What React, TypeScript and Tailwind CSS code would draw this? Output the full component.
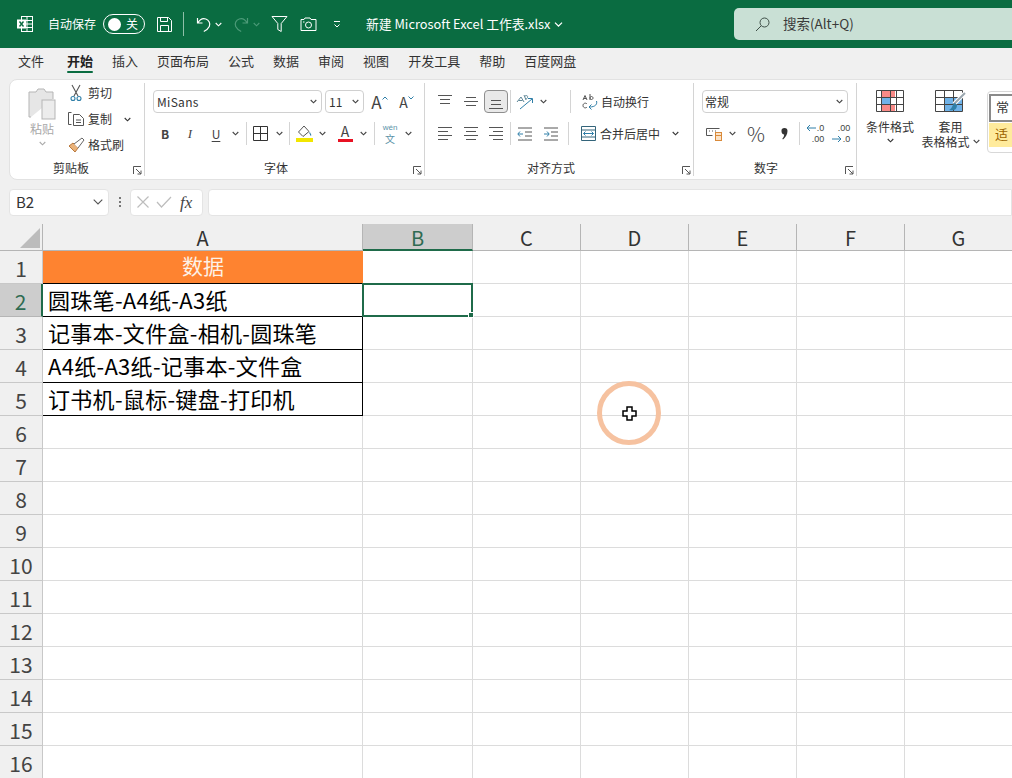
import type { ReactNode } from "react";

const tabs = ["文件", "开始", "插入", "页面布局", "公式", "数据", "审阅", "视图", "开发工具", "帮助", "百度网盘"];
const columns = ["B", "C", "D", "E", "F", "G"];
const rows = Array.from({ length: 16 }, (_, i) => i + 1);
const cellText: Record<number, string> = {
  2: "圆珠笔-A4纸-A3纸",
  3: "记事本-文件盒-相机-圆珠笔",
  4: "A4纸-A3纸-记事本-文件盒",
  5: "订书机-鼠标-键盘-打印机",
};

const Chev = ({ className = "text-[#444]" }: { className?: string }) => (
  <svg width="7" height="5" viewBox="0 0 7 5" fill="none" stroke="currentColor" strokeWidth="1.1" className={`shrink-0 ${className}`}>
    <path d="M.7 1 3.5 3.8 6.3 1" />
  </svg>
);

const Launcher = () => (
  <svg width="9" height="9" viewBox="0 0 9 9" fill="none" stroke="#555" strokeWidth="1" className="absolute right-[2px] bottom-[1px]">
    <path d="M.5 8V.5H8M3 3l5 5M8 4.5V8H4.5" />
  </svg>
);

const Sep = ({ className = "" }: { className?: string }) => <div className={`h-[23px] w-px bg-[#d4d4d4] ${className}`} />;

const Cell = ({ className, children }: { className: string; children: ReactNode }) => (
  <div className={`flex h-[23px] shrink-0 items-center justify-center ${className}`}>{children}</div>
);

const Lines = ({ kind }: { kind: "top" | "mid" | "bottom" | "left" | "center" | "right" }) => {
  const paths = {
    top: "M1 1.5h14M3 5.5h10M3 9.5h10",
    mid: "M3 3.5h10M1 7.5h14M3 11.5h10",
    bottom: "M3 6.5h10M3 10.5h10M1 14.5h14",
    left: "M1 1.5h14M1 5.5h10M1 9.5h14M1 13.5h10",
    center: "M1 1.5h14M3 5.5h10M1 9.5h14M3 13.5h10",
    right: "M1 1.5h14M5 5.5h10M1 9.5h14M5 13.5h10",
  };
  return (
    <svg width="16" height="16" viewBox="0 0 16 16" fill="none" stroke="#555" strokeWidth="1">
      <path d={paths[kind]} />
    </svg>
  );
};

const ExcelLogo = () => (
  <svg width="18" height="18" viewBox="0 0 18 18" className="shrink-0">
    <rect x="5.5" y="1.5" width="11" height="15" fill="none" stroke="#fff" strokeWidth="1" />
    <path d="M11 1.5v15M5.5 5.5h11M5.5 9h11M5.5 12.5h11" stroke="#fff" strokeWidth="1" />
    <rect x="1" y="4.5" width="9" height="9" fill="#fff" />
    <path d="M3.5 6.5l4 5M7.5 6.5l-4 5" stroke="#0a6c41" strokeWidth="1.4" />
  </svg>
);

const TitleBar = () => (
  <div className="flex h-[48px] items-center whitespace-nowrap bg-[#0a6c41] text-white [&>*]:shrink-0">
    <div className="ml-[16px]">
      <ExcelLogo />
    </div>
    <span className="ml-[14px] text-[12px] leading-none">自动保存</span>
    <div className="ml-[7px] flex h-[20px] w-[42px] items-center rounded-full border border-white pl-[4px]">
      <div className="size-[13px] rounded-full bg-white" />
      <span className="ml-[5px] text-[12px] leading-none">关</span>
    </div>
    <svg width="17" height="17" viewBox="0 0 17 17" fill="none" stroke="#fff" strokeWidth="1" className="ml-[11px]">
      <path d="M1.5 1.5h11l3 3v11h-14z" />
      <path d="M4.5 1.5v4h7v-4M4.5 15.5v-6h8v6" />
    </svg>
    <div className="ml-[10px] h-[24px] w-px bg-[#8fbfa8]" />
    <svg width="17" height="17" viewBox="0 0 17 17" fill="none" stroke="#fff" strokeWidth="1.2" className="ml-[12px]">
      <path d="M1.5 2v5h5M1.8 7c2-3.5 5-5 8-4s5 4.5 3.5 7.5-3.5 4-5.5 5" />
    </svg>
    <Chev className="ml-[2px] text-white" />
    <svg width="17" height="17" viewBox="0 0 17 17" fill="none" stroke="#4c9a78" strokeWidth="1.2" className="ml-[10px]">
      <path d="M15.5 2v5h-5M15.2 7c-2-3.5-5-5-8-4s-5 4.5-3.5 7.5 3.5 4 5.5 5" />
    </svg>
    <Chev className="ml-[4px] text-[#4c9a78]" />
    <svg width="17" height="18" viewBox="0 0 17 18" fill="none" stroke="#fff" strokeWidth="1" className="ml-[11px]">
      <path d="M1 1.5h15l-5.8 7v8l-3.4-2v-6z" />
    </svg>
    <svg width="17" height="15" viewBox="0 0 17 15" fill="none" stroke="#fff" strokeWidth="1" className="ml-[12px]">
      <path d="M1 2.5h3l1-1.5h5l1 1.5h5v11H1z" />
      <circle cx="8.5" cy="8" r="3" />
      <path d="M3 5h1.5" />
    </svg>
    <svg width="8" height="8" viewBox="0 0 8 8" fill="none" stroke="#fff" strokeWidth="1" className="ml-[16px]">
      <path d="M1 1.5h6M1.5 4.5 4 7l2.5-2.5" />
    </svg>
    <span className="ml-[25px] w-[189px] text-[12.8px] leading-none">新建 Microsoft Excel 工作表.xlsx</span>
    <Chev className="scale-125 text-white" />
    <div className="ml-[172px] flex h-[32px] w-[300px] items-center rounded-l-[5px] bg-[#c9e0d5] pl-[21px] text-[#3a3a3a]">
      <svg width="15" height="15" viewBox="0 0 15 15" fill="none" stroke="#3f4f48" strokeWidth="1">
        <circle cx="9.5" cy="5.5" r="4.5" />
        <path d="M6.2 8.8 1 14" />
      </svg>
      <span className="ml-[13px] text-[13.5px] leading-none">搜索(Alt+Q)</span>
    </div>
  </div>
);

const TabBar = () => (
  <div className="flex h-[31px] gap-[19px] bg-[#f0f0f0] pl-[18px] pt-[4px] text-[13px] leading-[18px] text-[#333]">
    {tabs.map((tab) =>
      tab === "开始" ? (
        <div key={tab} className="ml-[4px] flex h-[21px] flex-col items-center font-bold text-[#222]">
          {tab}
          <div className="mt-[1px] h-[2px] w-[26px] rounded-full bg-[#0a6c41]" />
        </div>
      ) : (
        <div key={tab}>{tab}</div>
      ),
    )}
  </div>
);

const ClipboardGroup = () => (
  <div className="relative flex h-full w-[135px] shrink-0 border-r border-[#d4d4d4]">
    <div className="ml-[14px] flex w-[36px] flex-col items-center pt-[4px]">
      <svg width="30" height="34" viewBox="0 0 30 34" fill="none" stroke="#b5b5b5" strokeWidth="1">
        <path d="M4 30H2V5h7l2-3h6l2 3h7v7" fill="#e6e6e6" />
        <rect x="15" y="13" width="13" height="19" fill="#ececec" />
      </svg>
      <span className="mt-[-2px] text-[12px] leading-[20px] text-[#a8a8a8]">粘贴</span>
      <Chev className="mt-[2px] text-[#aaa]" />
    </div>
    <div className="ml-[8px] flex flex-col gap-[6px] pt-[0px] text-[12px] leading-[20px] text-[#333]">
      <div className="flex items-center gap-[4px]">
        <svg width="16" height="18" viewBox="0 0 16 18" fill="none" strokeWidth="1.1">
          <path d="M4 1l6 11M12 1 6 12" stroke="#555" />
          <circle cx="5" cy="14.5" r="2" stroke="#2f7fa8" />
          <circle cx="11" cy="14.5" r="2" stroke="#2f7fa8" />
        </svg>
        剪切
      </div>
      <div className="flex items-center gap-[3px]">
        <svg width="17" height="16" viewBox="0 0 17 16" fill="none" stroke="#555" strokeWidth="1">
          <path d="M3.5 13.5h-3V1.5h3M5.5 3.5h6l4 4v7h-10zM8 9h5M8 11.5h5" />
        </svg>
        <span>复制</span>
        <Chev className="ml-[9px]" />
      </div>
      <div className="flex items-center gap-[3px]">
        <svg width="17" height="16" viewBox="0 0 17 16" fill="none" strokeWidth="1">
          <path d="M1 9l6 6 3-4-5-5z" fill="#e9b27a" stroke="#b8773a" />
          <path d="M6 7l8-6 2 2-6 8" fill="#fff" stroke="#666" />
        </svg>
        格式刷
      </div>
    </div>
    <div className="absolute bottom-[-1px] left-0 w-[122px] text-center text-[12px] leading-[18px] text-[#333]">剪贴板</div>
    <Launcher />
  </div>
);

const FontGroup = () => (
  <div className="relative h-full w-[280px] shrink-0 border-r border-[#d4d4d4] pl-[8px] pt-[7px]">
    <div className="flex h-[23px] items-center">
      <div className="flex h-[23px] w-[169px] items-center justify-between rounded-[4px] border border-[#d0d0d0] pl-[3px] pr-[4px] text-[12px] tracking-[0.3px] text-[#333]">
        MiSans
        <Chev />
      </div>
      <div className="ml-[3px] flex h-[23px] w-[39px] items-center justify-between rounded-[4px] border border-[#d0d0d0] pl-[3px] pr-[4px] text-[12px] text-[#333]">
        11
        <Chev />
      </div>
      <Cell className="ml-[2px] w-[27px] text-[#444]">
        <span className="text-[17px] leading-none">A</span>
        <svg width="6" height="4" viewBox="0 0 6 4" fill="none" stroke="#2f7fa8" className="mb-[8px]"><path d="M.5 3.5 3 1l2.5 2.5" /></svg>
      </Cell>
      <Cell className="w-[27px] text-[#444]">
        <span className="text-[14px] leading-none">A</span>
        <svg width="6" height="4" viewBox="0 0 6 4" fill="none" stroke="#2f7fa8" className="mb-[8px]"><path d="M.5.5 3 3 5.5.5" /></svg>
      </Cell>
    </div>
    <div className="mt-[9px] flex h-[23px] items-center text-[#444]">
      <Cell className="w-[24px] text-[12px] font-bold">B</Cell>
      <Cell className="w-[26px] font-['Liberation_Serif',serif] text-[13px] italic">I</Cell>
      <Cell className="w-[26px] text-[12px] underline underline-offset-2">U</Cell>
      <Cell className="w-[12px]"><Chev /></Cell>
      <Sep className="ml-[5px]" />
      <Cell className="ml-[4px] w-[18px]">
        <svg width="15" height="15" viewBox="0 0 15 15" fill="none" stroke="#333" strokeWidth="1">
          <path d="M.5.5h14v14H.5zM7.5.5v14M.5 7.5h14" />
        </svg>
      </Cell>
      <Cell className="w-[20px]"><Chev /></Cell>
      <Sep />
      <Cell className="ml-[5px] w-[18px]">
        <svg width="17" height="17" viewBox="0 0 17 17" fill="none">
          <path d="M8 1 2.5 7 7 11.5l6-5z" stroke="#555" />
          <path d="M13.5 7.5c1 1.5 1.5 2.5 1 3" stroke="#2f7fa8" strokeWidth="1.2" />
          <rect x="0" y="13" width="17" height="4" fill="#f2e600" />
        </svg>
      </Cell>
      <Cell className="w-[18px]"><Chev /></Cell>
      <Cell className="ml-[5px] w-[18px]">
        <div className="flex flex-col items-center">
          <span className="text-[14px] leading-[13px] text-[#444]">A</span>
          <div className="mt-[1px] h-[3px] w-[15px] bg-[#e81123]" />
        </div>
      </Cell>
      <Cell className="w-[18px]"><Chev /></Cell>
      <Sep className="ml-[2px]" />
      <Cell className="ml-[2px] w-[26px]">
        <div className="flex flex-col items-center text-[#5b93a8]">
          <span className="font-['Liberation_Sans',sans-serif] text-[8px] leading-[10px]">wén</span>
          <span className="text-[10px] leading-[12px]">文</span>
        </div>
      </Cell>
      <Cell className="w-[10px]"><Chev /></Cell>
    </div>
    <div className="absolute bottom-[-1px] left-0 w-[262px] text-center text-[12px] leading-[18px] text-[#333]">字体</div>
    <Launcher />
  </div>
);

const AlignGroup = () => (
  <div className="relative h-full w-[269px] shrink-0 border-r border-[#d4d4d4] pl-[7px] pt-[7px]">
    <div className="flex h-[23px] items-center">
      <Cell className="w-[26px]"><Lines kind="top" /></Cell>
      <Cell className="w-[26px]"><Lines kind="mid" /></Cell>
      <Cell className="w-[24px] rounded-[4px] border border-[#8e8e8e] bg-[#e9e9e9]"><Lines kind="bottom" /></Cell>
      <Sep className="ml-[2px]" />
      <Cell className="ml-[3px] w-[22px]">
        <svg width="18" height="18" viewBox="0 0 18 18" fill="none" strokeWidth="1">
          <path d="M1 9l4-5 3 5M2.5 7.5h4M8 2l2 5M9 3c2-1 3 0 2.5 1.5S10 6 9.5 5.5" stroke="#5f8797" />
          <path d="M4 16 16 6M12 5.5h4.5V10" stroke="#2f7fa8" />
        </svg>
      </Cell>
      <Cell className="w-[14px]"><Chev /></Cell>
      <Sep className="ml-[20px]" />
      <div className="ml-[11px] flex items-center gap-[3px] text-[12px] leading-none text-[#333]">
        <svg width="16" height="18" viewBox="0 0 16 18" fill="none" strokeWidth="1">
          <path d="M1 7l2-4.5L5 7M1.7 5.5h2.6M8 1v6M8 5c0-2 3-2 3 0s-3 2-3 0M5 11c-1-1.5-4-1-4 1.5S4 15.5 5 14" stroke="#555" />
          <path d="M14.5 8c1 3-1 6-7 6M9.5 11.5 7 14l2.5 2.5" stroke="#2f7fa8" />
        </svg>
        自动换行
      </div>
    </div>
    <div className="mt-[9px] flex h-[23px] items-center">
      <Cell className="w-[26px]"><Lines kind="left" /></Cell>
      <Cell className="w-[26px]"><Lines kind="center" /></Cell>
      <Cell className="w-[24px]"><Lines kind="right" /></Cell>
      <Sep className="ml-[2px]" />
      <Cell className="w-[27px]">
        <svg width="16" height="14" viewBox="0 0 16 14" fill="none" strokeWidth="1">
          <path d="M1 1h14M8 5h7M8 9h7M1 13h14" stroke="#555" />
          <path d="M6 7H1M3 4.5 .8 7 3 9.5" stroke="#2f7fa8" />
        </svg>
      </Cell>
      <Cell className="w-[26px]">
        <svg width="16" height="14" viewBox="0 0 16 14" fill="none" strokeWidth="1">
          <path d="M1 1h14M8 5h7M8 9h7M1 13h14" stroke="#555" />
          <path d="M1 7h5M4 4.5 6.2 7 4 9.5" stroke="#2f7fa8" />
        </svg>
      </Cell>
      <Sep className="ml-[4px]" />
      <div className="ml-[12px] flex items-center gap-[4px] text-[12px] leading-none text-[#333]">
        <svg width="15" height="15" viewBox="0 0 15 15" fill="none" strokeWidth="1">
          <path d="M.5.5h14v14H.5zM.5 4h14M.5 11h14" stroke="#33647a" />
          <path d="M2.5 7.5h10M4.5 5.5l-2 2 2 2M10.5 5.5l2 2-2 2" stroke="#2f7fa8" />
        </svg>
        <span>合并后居中</span>
        <Chev className="ml-[8px]" />
      </div>
    </div>
    <div className="absolute bottom-[-1px] left-0 w-[252px] text-center text-[12px] leading-[18px] text-[#333]">对齐方式</div>
    <Launcher />
  </div>
);

const ArrowLeft = () => (
  <svg width="10" height="8" viewBox="0 0 10 8" fill="none" stroke="#2f7fa8" strokeWidth="1" className="mr-[1px]">
    <path d="M10 4H1M4 1 1 4l3 3" />
  </svg>
);

const ArrowRight = () => (
  <svg width="10" height="8" viewBox="0 0 10 8" fill="none" stroke="#2f7fa8" strokeWidth="1" className="mr-[1px]">
    <path d="M0 4h9M6 1l3 3-3 3" />
  </svg>
);

const NumberGroup = () => (
  <div className="relative h-full w-[163px] shrink-0 border-r border-[#d4d4d4] pl-[8px] pt-[7px]">
    <div className="flex h-[23px] w-[146px] items-center justify-between rounded-[4px] border border-[#d0d0d0] pl-[2px] pr-[4px] text-[12px] text-[#333]">
      常规
      <Chev />
    </div>
    <div className="mt-[9px] flex h-[23px] items-center text-[#444]">
      <Cell className="ml-[2px] w-[20px]">
        <svg width="17" height="15" viewBox="0 0 17 15" fill="none" strokeWidth="1">
          <path d="M.5 2.5h13M.5 2.5v7h6M3 5h1M6 5h1M9 5h1" stroke="#555" />
          <rect x="9.5" y="6.5" width="6" height="8" fill="#fbe3c8" stroke="#d98a3a" />
          <path d="M9.500 9.5h6" stroke="#d98a3a" />
        </svg>
      </Cell>
      <Cell className="ml-[2px] w-[12px]"><Chev /></Cell>
      <Cell className="ml-[7px] w-[22px] text-[20px] font-light leading-none">%</Cell>
      <Cell className="ml-[4px] w-[26px]">
        <svg width="7" height="12" viewBox="0 0 7 12" fill="#333"><path d="M3.5 0a3 3 0 0 1 3 3c0 3.5-2 6.5-4.500 8.5L1.300 10.800C2.500 9.500 3.200 8 3.200 6.500 1.500 6.500.5 5 .5 3.300A3 3 0 0 1 3.500 0z" /></svg>
      </Cell>
      <Sep className="ml-[2px]" />
      <Cell className="ml-[1px] w-[28px]">
        <div className="flex flex-col items-end font-['Liberation_Sans',sans-serif] text-[9px] leading-[11px]">
          <span className="flex items-center"><ArrowLeft />.0</span>
          <span>.00</span>
        </div>
      </Cell>
      <Cell className="ml-[-2px] w-[28px]">
        <div className="flex flex-col items-end font-['Liberation_Sans',sans-serif] text-[9px] leading-[11px]">
          <span>.00</span>
          <span className="flex items-center"><ArrowRight />.0</span>
        </div>
      </Cell>
    </div>
    <div className="absolute bottom-[-1px] left-0 w-[144px] text-center text-[12px] leading-[18px] text-[#333]">数字</div>
    <Launcher />
  </div>
);

const StylesGroup = () => (
  <div className="flex h-full shrink-0 text-[12px] leading-[15px] text-[#333]">
    <div className="ml-[8px] flex w-[50px] flex-col items-center pt-[7px]">
      <svg width="28" height="22" viewBox="0 0 28 22" fill="none">
        <rect x="5" y="1" width="14" height="6.5" fill="#f88a87" />
        <rect x="5" y="7.5" width="9" height="7" fill="#6fb2e8" />
        <rect x="5" y="14.5" width="14" height="6.5" fill="#f88a87" />
        <path d="M.5.5h27v21H.5zM.5 7.500h27M.5 14.500h27M5.500.5v21M14.500.5v21M20.500.5v21" stroke="#444" />
      </svg>
      <span className="mt-[7px]">条件格式</span>
      <Chev className="mt-[4px]" />
    </div>
    <div className="ml-[5px] flex w-[61px] flex-col items-center pt-[7px]">
      <svg width="31" height="24" viewBox="0 0 31 24" fill="none" className="mb-[-2px]">
        <rect x="10" y="7" width="17" height="14" fill="#6fb2e8" />
        <path d="M.5.5h27v21H.5zM.5 7.500h27M.5 14.500h27M9.500.5v21M18.500.5v21" stroke="#444" />
        <path d="M30 3 19 14" stroke="#fff" strokeWidth="4" />
        <path d="M30 3 19 14" stroke="#9aa6ae" strokeWidth="2" />
        <path d="M20 13c-3 1-2 5-6 7 4 1 8 0 8-5z" fill="#2f7fa8" />
      </svg>
      <span className="mt-[7px]">套用</span>
      <span className="flex items-center gap-[3px] whitespace-nowrap">表格格式<Chev /></span>
    </div>
    <div className="ml-[6px] mt-[8px] h-[62px] w-[40px] rounded-[4px] border border-[#d8d8d8] pl-[1px] pt-[2px] text-[13px] leading-[22px]">
      <div className="h-[28px] border-2 border-[#8a8a8a] pl-[5px]">常</div>
      <div className="mt-[1px] h-[24px] bg-[#ffeb9c] pl-[6px] text-[#9c6500]">适</div>
    </div>
  </div>
);

const Ribbon = () => (
  <div className="bg-[#f0f0f0] pl-[9px]">
    <div className="flex h-[101px] w-[1020px] rounded-[8px] border border-[#e2e2e2] bg-white py-[3px]">
      <ClipboardGroup />
      <FontGroup />
      <AlignGroup />
      <NumberGroup />
      <StylesGroup />
    </div>
  </div>
);

const FormulaBar = () => (
  <div className="flex h-[44px] items-center bg-[#f0f0f0] pl-[9px]">
    <div className="flex h-[27px] w-[100px] items-center justify-between rounded-[4px] border border-[#e4e4e4] bg-white pl-[6px] pr-[5px] text-[15px] text-[#333]">
      B2
      <svg width="10" height="6" viewBox="0 0 10 6" fill="none" stroke="#555" strokeWidth="1.1"><path d="M.7.7 5 5 9.3.7" /></svg>
    </div>
    <div className="ml-[10px] flex flex-col gap-[2px]">
      <div className="size-[2px] bg-[#777]" />
      <div className="size-[2px] bg-[#777]" />
      <div className="size-[2px] bg-[#777]" />
    </div>
    <div className="ml-[9px] flex h-[27px] w-[73px] items-center rounded-[4px] border border-[#e4e4e4] bg-white pl-[6px]">
      <svg width="12" height="12" viewBox="0 0 12 12" fill="none" stroke="#bdbdbd" strokeWidth="1.2"><path d="M.5.5l11 11M11.5.5l-11 11" /></svg>
      <svg width="16" height="12" viewBox="0 0 16 12" fill="none" stroke="#bdbdbd" strokeWidth="1.2" className="ml-[7px]"><path d="M1 6l4.5 5L15 1" /></svg>
      <span className="ml-[8px] font-['Liberation_Serif',serif] text-[17px] italic leading-none text-[#444]">fx</span>
    </div>
    <div className="ml-[5px] h-[27px] flex-1 rounded-l-[4px] border border-[#e4e4e4] bg-white" />
  </div>
);

const Sheet = () => (
  <div className="grid grid-cols-[43px_320px_110px_108px_108px_108px_108px_108px] grid-rows-[27px] auto-rows-[33px] bg-white">
    <div className="flex items-end justify-end border-b border-r border-[#b5b5b5] bg-[#f0f0f0] p-[2px]">
      <div className="size-[20px] bg-[#bcbcbc] [clip-path:polygon(100%_0,100%_100%,0_100%)]" />
    </div>
    <div className="flex items-center justify-center border-b border-r border-[#b5b5b5] bg-[#f0f0f0] pt-[2px] text-[20px] leading-none text-[#333]">A</div>
    {columns.map((col) =>
      col === "B" ? (
        <div key={col} className="flex items-center justify-center border-b-2 border-r border-b-[#1f6b4a] border-r-[#b5b5b5] bg-[#cdcdcd] pt-[3px] text-[20px] leading-none text-[#2f6b52]">
          {col}
        </div>
      ) : (
        <div key={col} className="flex items-center justify-center border-b border-r border-[#b5b5b5] bg-[#f0f0f0] pt-[2px] text-[20px] leading-none text-[#333]">
          {col}
        </div>
      ),
    )}
    {rows.map((row) => (
      <div key={row} className="contents">
        <div
          className={
            row === 2
              ? "flex items-center justify-center border-b border-r-2 border-b-[#b5b5b5] border-r-[#1f6b4a] bg-[#cdcdcd] pt-[3px] text-[21px] leading-none text-[#2f6b52]"
              : "flex items-center justify-center border-b border-r border-[#c8c8c8] bg-[#f0f0f0] pt-[3px] text-[21px] leading-none text-[#444]"
          }
        >
          {row}
        </div>
        {row === 1 ? (
          <div className="flex items-center justify-center border-b border-black bg-[#fe8330] pb-[3px] text-[21px] leading-none text-[#fdf1e6]">数据</div>
        ) : cellText[row] ? (
          <div className="flex items-center whitespace-nowrap border-b border-r border-black pb-[3px] pl-[5px] text-[22px] leading-none tracking-[0.3px] text-black">{cellText[row]}</div>
        ) : (
          <div className="border-b border-r border-[#dcdcdc]" />
        )}
        {columns.map((col) => (
          <div key={col} className="relative border-b border-r border-[#dcdcdc]">
            {col === "B" && row === 2 && (
              <div className="absolute -left-[1px] -top-[1px] z-10 h-[34px] w-[111px] border-2 border-[#1f6b4a]">
                <div className="absolute -bottom-[3px] -right-[3px] size-[6px] border border-white bg-[#1f6b4a]" />
              </div>
            )}
          </div>
        ))}
      </div>
    ))}
  </div>
);

const App = () => {
  return (
    <div className="relative h-[778px] w-[1012px] overflow-hidden bg-white font-['Noto_Sans_CJK_SC','Noto_Sans',sans-serif]">
      <TitleBar />
      <TabBar />
      <Ribbon />
      <FormulaBar />
      <Sheet />
      {/* 录屏时的鼠标高亮 */}
      <div className="absolute left-[597px] top-[381px] z-20 flex size-[64px] items-center justify-center rounded-full border-[5px] border-[#f6c2a0]">
        <svg width="15" height="15" viewBox="0 0 15 15" fill="#fff" stroke="#000" strokeWidth="1.5">
          <path d="M5 1h5v4h4v5h-4v4H5v-4H1V5h4z" />
        </svg>
      </div>
    </div>
  );
};

export default App;
